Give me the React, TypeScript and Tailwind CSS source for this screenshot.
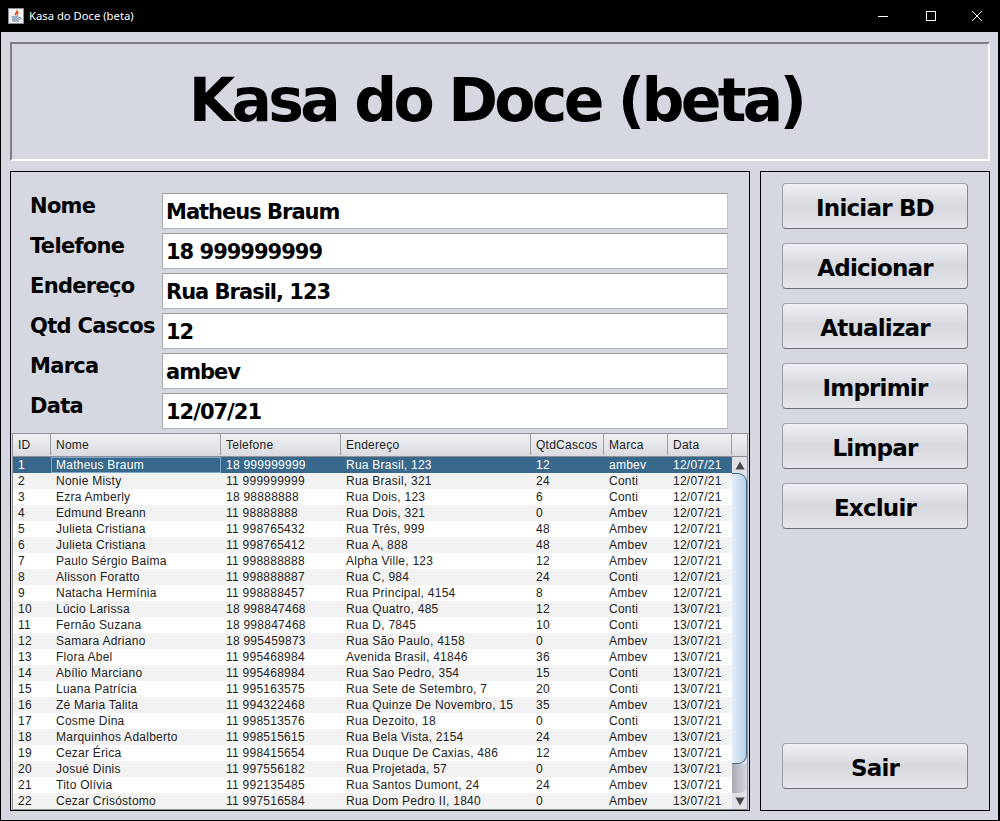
const rows = [
    ['1', 'Matheus Braum', '18 999999999', 'Rua Brasil, 123', '12', 'ambev', '12/07/21'],
    ['2', 'Nonie Misty', '11 999999999', 'Rua Brasil, 321', '24', 'Conti', '12/07/21'],
    ['3', 'Ezra Amberly', '18 98888888', 'Rua Dois, 123', '6', 'Conti', '12/07/21'],
    ['4', 'Edmund Breann', '11 98888888', 'Rua Dois, 321', '0', 'Ambev', '12/07/21'],
    ['5', 'Julieta Cristiana', '11 998765432', 'Rua Três, 999', '48', 'Ambev', '12/07/21'],
    ['6', 'Julieta Cristiana', '11 998765412', 'Rua A, 888', '48', 'Ambev', '12/07/21'],
    ['7', 'Paulo Sérgio Baima', '11 998888888', 'Alpha Ville, 123', '12', 'Ambev', '12/07/21'],
    ['8', 'Alisson Foratto', '11 998888887', 'Rua C, 984', '24', 'Conti', '12/07/21'],
    ['9', 'Natacha Hermínia', '11 998888457', 'Rua Principal, 4154', '8', 'Ambev', '12/07/21'],
    ['10', 'Lúcio Larissa', '18 998847468', 'Rua Quatro, 485', '12', 'Conti', '13/07/21'],
    ['11', 'Fernão Suzana', '18 998847468', 'Rua D, 7845', '10', 'Conti', '13/07/21'],
    ['12', 'Samara Adriano', '18 995459873', 'Rua São Paulo, 4158', '0', 'Ambev', '13/07/21'],
    ['13', 'Flora Abel', '11 995468984', 'Avenida Brasil, 41846', '36', 'Ambev', '13/07/21'],
    ['14', 'Abílio Marciano', '11 995468984', 'Rua Sao Pedro, 354', '15', 'Conti', '13/07/21'],
    ['15', 'Luana Patrícia', '11 995163575', 'Rua Sete de Setembro, 7', '20', 'Conti', '13/07/21'],
    ['16', 'Zé Maria Talita', '11 994322468', 'Rua Quinze De Novembro, 15', '35', 'Ambev', '13/07/21'],
    ['17', 'Cosme Dina', '11 998513576', 'Rua Dezoito, 18', '0', 'Conti', '13/07/21'],
    ['18', 'Marquinhos Adalberto', '11 998515615', 'Rua Bela Vista, 2154', '24', 'Ambev', '13/07/21'],
    ['19', 'Cezar Érica', '11 998415654', 'Rua Duque De Caxias, 486', '12', 'Ambev', '13/07/21'],
    ['20', 'Josué Dinis', '11 997556182', 'Rua Projetada, 57', '0', 'Ambev', '13/07/21'],
    ['21', 'Tito Olívia', '11 992135485', 'Rua Santos Dumont, 24', '24', 'Ambev', '13/07/21'],
    ['22', 'Cezar Crisóstomo', '11 997516584', 'Rua Dom Pedro II, 1840', '0', 'Ambev', '13/07/21'],
]

const columns = [
    { title: 'ID', width: 'w-[38px]' },
    { title: 'Nome', width: 'w-[170px]' },
    { title: 'Telefone', width: 'w-[120px]' },
    { title: 'Endereço', width: 'w-[190px]' },
    { title: 'QtdCascos', width: 'w-[73px]' },
    { title: 'Marca', width: 'w-[64px]' },
    { title: 'Data', width: 'w-[64px]' },
]

const fields = [
    ['Nome', 'Matheus Braum'],
    ['Telefone', '18 999999999'],
    ['Endereço', 'Rua Brasil, 123'],
    ['Qtd Cascos', '12'],
    ['Marca', 'ambev'],
    ['Data', '12/07/21'],
]

function JavaIcon() {
    return (
        <svg width="16" height="16" viewBox="0 0 16 16">
            <rect x="0.5" y="0.5" width="15" height="15" fill="#f4f4f6" stroke="#8a8f98" />
            <path d="M9 2 C10 4 6 5 7.5 7.5 C6 5.5 11 5 9 2 Z M10.5 4.5 C9 5.5 8.5 6.5 9.5 8" fill="none" stroke="#e0521b" strokeWidth="1.2" />
            <path d="M3.5 9 H10.5 M4 11 H10 M4.5 13 H11 M11 9.5 C13.5 9 13.5 11.5 10.5 11.5" fill="none" stroke="#3f6f9f" strokeWidth="1" />
        </svg>
    )
}

function ActionButton({ label }: { label: string }) {
    return (
        <button className="flex h-[46px] w-[186px] items-center justify-center rounded-[4px] border border-t-[#a3a5aa] border-r-[#85878c] border-b-[#6b6d72] border-l-[#9a9ca1] bg-gradient-to-b from-[#eef0f3] via-[#d6d8de] to-[#e4e6ea] pt-1 text-[23px] font-bold tracking-[-0.8px] text-black">
            {label}
        </button>
    )
}

function ArrowUp() {
    return (
        <svg width="10" height="9" viewBox="0 0 10 9">
            <path d="M5 0.5 L9.5 8.5 H0.5 Z" fill="#45484d" />
        </svg>
    )
}

function ArrowDown() {
    return (
        <svg width="10" height="9" viewBox="0 0 10 9">
            <path d="M0.5 0.5 H9.5 L5 8.5 Z" fill="#45484d" />
        </svg>
    )
}

export default function App() {
    return (
        <div className="flex h-[821px] w-[1000px] flex-col overflow-hidden bg-black font-['DejaVu_Sans',sans-serif] text-black">
            <div className="flex h-8 shrink-0 items-center font-['Noto_Sans',sans-serif] text-[11.25px] text-white">
                <div className="ml-2 mr-[5px] flex">
                    <JavaIcon />
                </div>
                <span className="flex-1">Kasa do Doce (beta)</span>
                <svg width="12" height="12" viewBox="0 0 12 12" className="mr-[35px]">
                    <path d="M0 6.5 H10" stroke="#fff" />
                </svg>
                <svg width="12" height="12" viewBox="0 0 12 12" className="mr-[34px]">
                    <rect x="1.5" y="1.5" width="9" height="9" fill="none" stroke="#fff" />
                </svg>
                <svg width="12" height="12" viewBox="0 0 12 12" className="mr-[17px]">
                    <path d="M1 1 L11 11 M11 1 L1 11" stroke="#fff" />
                </svg>
            </div>

            <div className="ml-px mr-[2px] mb-px flex min-h-0 flex-1 flex-col gap-2.5 bg-[#d5d8e0] pb-[9px] pl-[9px] pr-[8px] pt-2.5">
                <div className="flex h-[119px] shrink-0 items-center justify-center border-2 border-t-[#7d7f84] border-r-white border-b-white border-l-[#7d7f84] pb-[3px] pr-2 text-[60px] font-bold leading-none tracking-[-3.7px]">
                    Kasa do Doce (beta)
                </div>

                <div className="flex min-h-0 flex-1 gap-2.5">
                    <div className="flex w-[740px] flex-col border border-black px-px pt-[21px]">
                        <div className="flex flex-col gap-1 pl-[18px] pr-[20px]">
                            {fields.map(([label, value]) => (
                                <div key={label} className="flex h-9 items-start">
                                    <span className="w-[132px] shrink-0 whitespace-nowrap pt-px text-[21px] font-bold leading-[24px] tracking-[-0.7px]">{label}</span>
                                    <div className="flex h-9 flex-1 items-center border border-t-[#9a9a9a] border-r-[#c4c4c4] border-b-[#b4b4b4] border-l-[#a8a8a8] bg-white pl-[3px] pt-1 text-[21px] font-bold tracking-[-1px]">
                                        {value}
                                    </div>
                                </div>
                            ))}
                        </div>

                        <div className="mt-[4px] flex flex-1 flex-col overflow-hidden border border-[#8f9196] bg-[#d5d8e0] font-['Liberation_Sans',sans-serif] text-[12px] tracking-[0.25px]">
                            <div className="flex h-[23px] shrink-0 border-b border-[#8f9196] bg-gradient-to-b from-[#f0f1f3] to-[#d9dbe0] pb-px text-[#222]">
                                {columns.map((column) => (
                                    <div key={column.title} className={`${column.width} flex shrink-0 items-center border-r border-[#9a9ca1] pl-[5px]`}>
                                        {column.title}
                                    </div>
                                ))}
                                <div className="flex-1" />
                            </div>
                            <div className="flex flex-1">
                                <div className="w-[719px] shrink-0">
                                    {rows.map((row, index) => (
                                        <div
                                            key={row[0]}
                                            className={`flex h-4 leading-4 ${index === 0 ? 'bg-[#38698c] text-white' : index % 2 === 1 ? 'bg-[#f2f2f2] text-[#222]' : 'bg-white text-[#222]'}`}
                                        >
                                            {row.map((cell, cellIndex) => (
                                                <div
                                                    key={cellIndex}
                                                    className={`${columns[cellIndex].width} shrink-0 overflow-hidden whitespace-nowrap ${index === 0 && cellIndex === 1 ? 'border border-[#7aa8d0] pl-[4px] leading-[14px]' : 'pl-[5px]'}`}
                                                >
                                                    {cell}
                                                </div>
                                            ))}
                                        </div>
                                    ))}
                                </div>
                                <div className="flex flex-1 flex-col bg-[#dfe1e6]">
                                    <div className="flex h-4 shrink-0 items-center justify-center">
                                        <ArrowUp />
                                    </div>
                                    <div className="h-[291px] shrink-0 rounded-r-[9px] border border-l-0 border-[#44688c] bg-gradient-to-r from-[#e4eef8] to-[#b7d0ea]" />
                                    <div className="flex-1 rounded-br-lg bg-gradient-to-r from-[#a9abb0] to-[#d5d8e0]" />
                                    <div className="flex h-4 shrink-0 items-center justify-center">
                                        <ArrowDown />
                                    </div>
                                </div>
                            </div>
                        </div>
                    </div>

                    <div className="flex w-[230px] flex-col border border-black pl-[21px] pt-[11px] pb-[21px]">
                        <div className="flex flex-col gap-3.5">
                            {['Iniciar BD', 'Adicionar', 'Atualizar', 'Imprimir', 'Limpar', 'Excluir'].map((label) => (
                                <ActionButton key={label} label={label} />
                            ))}
                        </div>
                        <div className="mt-auto">
                            <ActionButton label="Sair" />
                        </div>
                    </div>
                </div>
            </div>
        </div>
    )
}
